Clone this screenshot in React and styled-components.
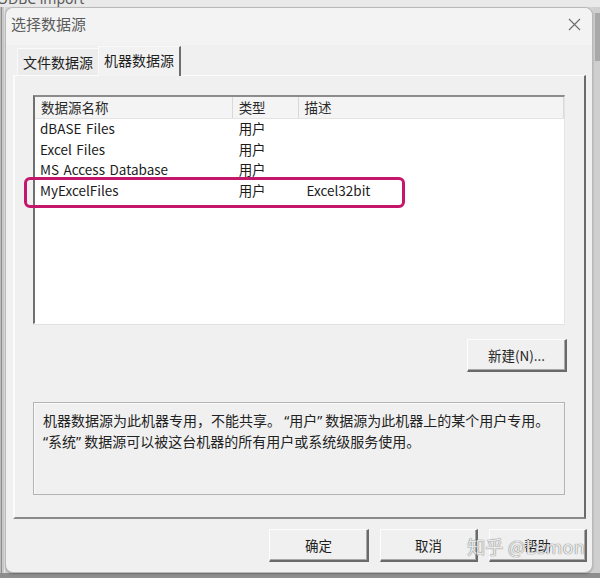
import React from 'react';
import styled, { createGlobalStyle } from 'styled-components';

const GlobalStyle = createGlobalStyle`
	*, *::before, *::after {
		box-sizing: border-box;
	}
	html, body {
		margin: 0;
		padding: 0;
		background: #d6d6d6;
	}
	body {
		font-family: "Noto Sans CJK SC", "Noto Sans", sans-serif;
		color: #1b1b1b;
	}
`;

const sources = [
	{ name: 'dBASE Files', type: '用户', desc: '' },
	{ name: 'Excel Files', type: '用户', desc: '' },
	{ name: 'MS Access Database', type: '用户', desc: '' },
	{ name: 'MyExcelFiles', type: '用户', desc: 'Excel32bit' },
];

export default function App() {
	return (
		<>
			<GlobalStyle />
			<Screen>
				<BackStrip>
					<BackTitle>ODBC import</BackTitle>
				</BackStrip>
				<Middle>
					<LeftGutter />
					<Dialog>
						<TitleBar>
							<Title>选择数据源</Title>
							<CloseButton>
								<svg width='13' height='13' viewBox='0 0 13 13'>
									<path d='M1 1 L12 12 M12 1 L1 12' stroke='#6f6f6f' strokeWidth='1.2' />
								</svg>
							</CloseButton>
						</TitleBar>
						<TabStrip>
							<Tab>文件数据源</Tab>
							<Tab $active>机器数据源</Tab>
						</TabStrip>
						<Panel>
							<ListWrap>
								<ListView>
									<HeaderRow>
										<HeadCell $w={198}>数据源名称</HeadCell>
										<HeadCell $w={66}>类型</HeadCell>
										<HeadCell $w={266}>描述</HeadCell>
									</HeaderRow>
									{sources.map((s) => (
										<Row key={s.name}>
											<Cell $w={198}>{s.name}</Cell>
											<Cell $w={66}>{s.type}</Cell>
											<Cell $w={266}>{s.desc}</Cell>
										</Row>
									))}
								</ListView>
								<Highlight />
							</ListWrap>
							<ActionRow>
								<Button $w={100}>新建(N)...</Button>
							</ActionRow>
							<InfoBox>
								机器数据源为此机器专用，不能共享。 <Quote>“</Quote>用户<Quote>”</Quote> 数据源为此机器上的某个用户专用。
								<br />
								<Quote>“</Quote>系统<Quote>”</Quote> 数据源可以被这台机器的所有用户或系统级服务使用。
							</InfoBox>
						</Panel>
						<Footer>
							<Button $w={100}>确定</Button>
							<Button $w={98}>取消</Button>
							<Button $w={98}>帮助</Button>
							<Watermark>知乎 @Lemon</Watermark>
						</Footer>
					</Dialog>
					<RightGutter>
						<ScrollThumb />
					</RightGutter>
				</Middle>
				<BottomStrip />
			</Screen>
		</>
	);
}

const Screen = styled.div`
	width: 600px;
	height: 578px;
	display: flex;
	flex-direction: column;
	overflow: hidden;
	background: #d4d4d4;
`;

const BackStrip = styled.div`
	height: 7px;
	overflow: hidden;
	background: #e9e9e9;
`;

const BackTitle = styled.div`
	margin-top: -9px;
	margin-left: -3px;
	font-family: "Noto Sans", sans-serif;
	font-size: 14px;
	line-height: 16px;
	color: #5a5a5a;
`;

const Middle = styled.div`
	display: flex;
	height: 566px;
`;

const LeftGutter = styled.div`
	width: 5px;
	background: linear-gradient(90deg, #bdbdbd 0, #bdbdbd 1px, #8c8c8c 1px, #8c8c8c 2px, #c9c9c9 2px, #c9c9c9 4px, #e6e6e6 4px);
`;

const RightGutter = styled.div`
	width: 7px;
	display: flex;
	flex-direction: column;
	padding-top: 6px;
	background: #cfcfcf;
`;

const ScrollThumb = styled.div`
	height: 48px;
	margin-left: 2px;
	background: #a8a8a8;
`;

const BottomStrip = styled.div`
	flex: 1;
	background: #8e8e8e;
`;

const Dialog = styled.div`
	width: 588px;
	height: 566px;
	display: flex;
	flex-direction: column;
	background: #f0f0f0;
	border: 1px solid #b9b9b9;
	border-radius: 8px;
	box-shadow: 0 1px 2px rgba(0, 0, 0, 0.25);
	position: relative;
`;

const TitleBar = styled.div`
	height: 37px;
	flex-shrink: 0;
	display: flex;
	align-items: center;
	justify-content: space-between;
	padding: 0 11px 7px 5px;
	background: #f3f3f3;
	border-radius: 8px 8px 0 0;
`;

const Title = styled.div`
	font-size: 15px;
	color: #5c5c5c;
`;

const CloseButton = styled.div`
	display: flex;
	align-items: center;
	margin-top: 3px;
`;

const Tab = styled.div`
	height: ${(p) => (p.$active ? '30px' : '27px')};
	padding: 0 5px ${(p) => (p.$active ? '3px' : '1px')} 5px;
	display: flex;
	align-items: center;
	font-size: 14px;
	color: #1e1e1e;
	background: ${(p) => (p.$active ? '#f2f2f2' : '#ececec')};
	border-top: 1px solid #fafafa;
	border-left: 1px solid #fafafa;
	border-right: ${(p) => (p.$active ? '2px solid #6e6e6e' : '0')};
	margin-bottom: ${(p) => (p.$active ? '-1px' : '0')};
	position: relative;
	z-index: 1;
`;

const TabStrip = styled.div`
	display: flex;
	align-items: flex-end;
	height: 30px;
	flex-shrink: 0;
	padding-left: 11px;
`;

const Panel = styled.div`
	width: 573px;
	height: 444px;
	flex-shrink: 0;
	margin-left: 7px;
	padding: 19px 19px 0 18px;
	display: flex;
	flex-direction: column;
	background: #f0f0f0;
	border-top: 1px solid #fbfbfb;
	border-left: 2px solid #fbfbfb;
	border-right: 2px solid #6b6b6b;
	border-bottom: 2px solid #8a8a8a;
`;

const ListWrap = styled.div`
	position: relative;
`;

const ListView = styled.div`
	width: 532px;
	height: 229px;
	background: #ffffff;
	border-top: 2px solid #8c8c8c;
	border-left: 2px solid #707070;
	border-right: 1px solid #e4e4e4;
	border-bottom: 1px solid #ffffff;
	box-shadow: 0 1px 0 #e0e0e0;
	overflow: hidden;
`;

const HeaderRow = styled.div`
	display: flex;
	height: 22px;
	background: #f4f4f4;
	border-bottom: 1px solid #e4e4e4;
`;

const HeadCell = styled.div`
	width: ${(p) => p.$w}px;
	padding-left: 6px;
	padding-bottom: 2px;
	display: flex;
	align-items: center;
	font-size: 13.5px;
	color: #2a2a2a;
	border-right: 1px solid #d9d9d9;
`;

const Row = styled.div`
	display: flex;
	height: 20.5px;
`;

const Cell = styled.div`
	width: ${(p) => p.$w}px;
	padding-left: 5px;
	padding-bottom: 2px;
	display: flex;
	align-items: center;
	font-size: 13.5px;
	word-spacing: 1.5px;
	color: #1c1c1c;
	white-space: nowrap;
	&:nth-child(2) {
		padding-left: 6px;
	}
	&:nth-child(3) {
		padding-left: 8px;
	}
`;

const Highlight = styled.div`
	position: absolute;
	left: -9px;
	top: 82px;
	width: 381px;
	height: 31px;
	border: 3px solid #c4176c;
	border-radius: 6px;
	pointer-events: none;
`;

const ActionRow = styled.div`
	display: flex;
	justify-content: flex-end;
	margin-top: 15px;
	margin-right: -2px;
`;

const Button = styled.div`
	width: ${(p) => p.$w}px;
	height: 33px;
	flex-shrink: 0;
	display: flex;
	align-items: center;
	justify-content: center;
	padding-bottom: 1px;
	font-size: 13.5px;
	color: #1e1e1e;
	background: #f0f0f0;
	border-top: 1px solid #fdfdfd;
	border-left: 1px solid #fdfdfd;
	border-right: 2px solid #6a6a6a;
	border-bottom: 2px solid #6a6a6a;
	box-shadow: inset -1px -1px 0 #a8a8a8;
`;

const InfoBox = styled.div`
	margin-top: 30px;
	height: 93px;
	padding: 7px 8px 0 9px;
	font-size: 14px;
	line-height: 20px;
	color: #222;
	border: 1px solid #b4b4b4;
	box-shadow: inset 1px 1px 0 #fafafa;
	white-space: nowrap;
`;

const Quote = styled.span`
	font-family: "Noto Sans", sans-serif;
`;

const Footer = styled.div`
	flex: 1;
	display: flex;
	justify-content: flex-end;
	align-items: flex-start;
	gap: 11px;
	padding: 10px 5px 0 0;
	position: relative;
`;

const Watermark = styled.div`
	position: absolute;
	right: 7px;
	top: 14px;
	font-family: "Noto Sans CJK SC", "Noto Sans", sans-serif;
	font-size: 18px;
	letter-spacing: 0.3px;
	color: rgba(255, 255, 255, 0.85);
	text-shadow: 0 0 1px #7a7a7a, 0 0 1px #7a7a7a;
	pointer-events: none;
`;
